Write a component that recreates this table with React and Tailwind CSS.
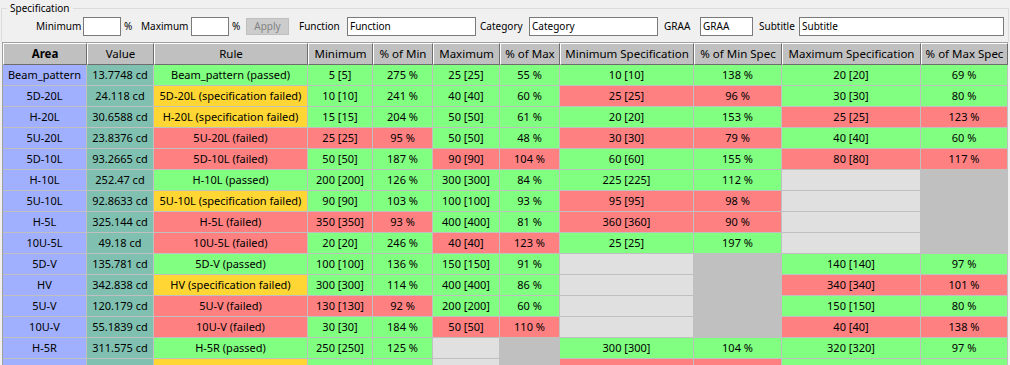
import React from "react";

const COLS = [
  { name: "Area", w: "w-[84px]", bold: true },
  { name: "Value", w: "w-[67px]" },
  { name: "Rule", w: "w-[154px]" },
  { name: "Minimum", w: "w-[65px]" },
  { name: "% of Min", w: "w-[60px]" },
  { name: "Maximum", w: "w-[67px]" },
  { name: "% of Max", w: "w-[60px]" },
  { name: "Minimum Specification", w: "w-[134px]" },
  { name: "% of Min Spec", w: "w-[88px]" },
  { name: "Maximum Specification", w: "w-[139px]" },
  { name: "% of Max Spec", w: "w-[87px]" },
];

const BG = {
  A: "bg-[#a0b0ff]",
  V: "bg-[#80c0b0]",
  G: "bg-[#80ff80]",
  R: "bg-[#ff8080]",
  Y: "bg-[#ffd633]",
  L: "bg-[#e0e0e0]",
  D: "bg-[#c0c0c0]",
};

const ROWS = [
  ["Beam_pattern", "13.7748 cd", ["Beam_pattern (passed)", "G"], ["5 [5]", "G"], ["275 %", "G"], ["25 [25]", "G"], ["55 %", "G"], ["10 [10]", "G"], ["138 %", "G"], ["20 [20]", "G"], ["69 %", "G"]],
  ["5D-20L", "24.118 cd", ["5D-20L (specification failed)", "Y"], ["10 [10]", "G"], ["241 %", "G"], ["40 [40]", "G"], ["60 %", "G"], ["25 [25]", "R"], ["96 %", "R"], ["30 [30]", "G"], ["80 %", "G"]],
  ["H-20L", "30.6588 cd", ["H-20L (specification failed)", "Y"], ["15 [15]", "G"], ["204 %", "G"], ["50 [50]", "G"], ["61 %", "G"], ["20 [20]", "G"], ["153 %", "G"], ["25 [25]", "R"], ["123 %", "R"]],
  ["5U-20L", "23.8376 cd", ["5U-20L (failed)", "R"], ["25 [25]", "R"], ["95 %", "R"], ["50 [50]", "G"], ["48 %", "G"], ["30 [30]", "R"], ["79 %", "R"], ["40 [40]", "G"], ["60 %", "G"]],
  ["5D-10L", "93.2665 cd", ["5D-10L (failed)", "R"], ["50 [50]", "G"], ["187 %", "G"], ["90 [90]", "R"], ["104 %", "R"], ["60 [60]", "G"], ["155 %", "G"], ["80 [80]", "R"], ["117 %", "R"]],
  ["H-10L", "252.47 cd", ["H-10L (passed)", "G"], ["200 [200]", "G"], ["126 %", "G"], ["300 [300]", "G"], ["84 %", "G"], ["225 [225]", "G"], ["112 %", "G"], ["", "L"], ["", "D"]],
  ["5U-10L", "92.8633 cd", ["5U-10L (specification failed)", "Y"], ["90 [90]", "G"], ["103 %", "G"], ["100 [100]", "G"], ["93 %", "G"], ["95 [95]", "R"], ["98 %", "R"], ["", "L"], ["", "D"]],
  ["H-5L", "325.144 cd", ["H-5L (failed)", "R"], ["350 [350]", "R"], ["93 %", "R"], ["400 [400]", "G"], ["81 %", "G"], ["360 [360]", "R"], ["90 %", "R"], ["", "L"], ["", "D"]],
  ["10U-5L", "49.18 cd", ["10U-5L (failed)", "R"], ["20 [20]", "G"], ["246 %", "G"], ["40 [40]", "R"], ["123 %", "R"], ["25 [25]", "G"], ["197 %", "G"], ["", "L"], ["", "D"]],
  ["5D-V", "135.781 cd", ["5D-V (passed)", "G"], ["100 [100]", "G"], ["136 %", "G"], ["150 [150]", "G"], ["91 %", "G"], ["", "L"], ["", "D"], ["140 [140]", "G"], ["97 %", "G"]],
  ["HV", "342.838 cd", ["HV (specification failed)", "Y"], ["300 [300]", "G"], ["114 %", "G"], ["400 [400]", "G"], ["86 %", "G"], ["", "L"], ["", "D"], ["340 [340]", "R"], ["101 %", "R"]],
  ["5U-V", "120.179 cd", ["5U-V (failed)", "R"], ["130 [130]", "R"], ["92 %", "R"], ["200 [200]", "G"], ["60 %", "G"], ["", "L"], ["", "D"], ["150 [150]", "G"], ["80 %", "G"]],
  ["10U-V", "55.1839 cd", ["10U-V (failed)", "R"], ["30 [30]", "G"], ["184 %", "G"], ["50 [50]", "R"], ["110 %", "R"], ["", "L"], ["", "D"], ["40 [40]", "R"], ["138 %", "R"]],
  ["H-5R", "311.575 cd", ["H-5R (passed)", "G"], ["250 [250]", "G"], ["125 %", "G"], ["", "L"], ["", "D"], ["300 [300]", "G"], ["104 %", "G"], ["320 [320]", "G"], ["97 %", "G"]],
  ["10U-5R", "88.5199 cd", ["10U-5R (specification failed)", "Y"], ["90 [90]", "G"], ["179 %", "G"], ["", "L"], ["", "D"], ["90 [90]", "R"], ["97 %", "R"], ["90 [90]", "G"], ["99 %", "G"]],
];

function Label({ w, ml, children }) {
  return <div className={`${w} ${ml} shrink-0 whitespace-nowrap leading-[19px]`}>{children}</div>;
}

function Box({ w, ml, children }) {
  return (
    <div className={`${w} ${ml} shrink-0 h-[19px] bg-white border border-[#7a7a7a] pl-[2px] flex items-center whitespace-nowrap overflow-hidden`}>
      {children}
    </div>
  );
}

export default function App() {
  return (
    <div className="w-[1010px] h-[365px] overflow-hidden bg-[#f0f0f0] text-black font-['Noto_Sans',sans-serif]">
      <fieldset className="ml-[1px] w-[1008px] border border-b-0 border-[#dcdcdc] pb-[6px]">
        <legend className="ml-[5px] px-[3px] text-[10px] leading-[16px]">Specification</legend>
        <div className="flex items-center h-[19px] mt-[1px] pl-[34px] text-[10px]">
          <Label w="w-[41px]" ml="ml-0">Minimum</Label>
          <Box w="w-[38px]" ml="ml-[6px]"></Box>
          <Label w="w-[7px]" ml="ml-[3px]">%</Label>
          <Label w="w-[45px]" ml="ml-[10px]">Maximum</Label>
          <Box w="w-[38px]" ml="ml-[5px]"></Box>
          <Label w="w-[7px]" ml="ml-[3px]">%</Label>
          <div className="w-[43px] ml-[7px] h-[17px] shrink-0 bg-[#cccccc] border border-[#bfbfbf] text-[#838383] flex items-center justify-center">
            Apply
          </div>
          <Label w="w-[41px]" ml="ml-[10px]">Function</Label>
          <Box w="w-[129px]" ml="ml-[7px]">Function</Box>
          <Label w="w-[44px]" ml="ml-[4px]">Category</Label>
          <Box w="w-[129px]" ml="ml-[5px]">Category</Box>
          <Label w="w-[30px]" ml="ml-[6px]">GRAA</Label>
          <Box w="w-[53px]" ml="ml-[6px]">GRAA</Box>
          <Label w="w-[35px]" ml="ml-[6px]">Subtitle</Label>
          <Box w="w-[205px]" ml="ml-[5px]">Subtitle</Box>
        </div>
      </fieldset>

      <div className="ml-[2px] w-[1006px] border-l border-t border-[#a0a0a0]">
        <div className="flex">
          {COLS.map((c) => (
            <div
              key={c.name}
              className={`${c.w} shrink-0 h-[22px] flex items-center justify-center whitespace-nowrap overflow-hidden bg-[#c0c0c0] border border-t-white border-l-white border-r-[#6d6d6d] border-b-[#6d6d6d] text-[11.5px] ${c.bold ? "font-bold" : ""}`}
            >
              {c.name}
            </div>
          ))}
        </div>
        {ROWS.map((r) => {
          const cells = [[r[0], "A"], [r[1], "V"], ...r.slice(2)];
          return (
            <div key={r[0]} className="flex">
              {cells.map(([t, bg], i) => (
                <div
                  key={i}
                  className={`${COLS[i].w} ${BG[bg]} shrink-0 h-[21px] flex items-center justify-center whitespace-nowrap overflow-hidden border-r border-b border-[#c0c0c0] text-[11px]`}
                >
                  {t}
                </div>
              ))}
            </div>
          );
        })}
      </div>
    </div>
  );
}
